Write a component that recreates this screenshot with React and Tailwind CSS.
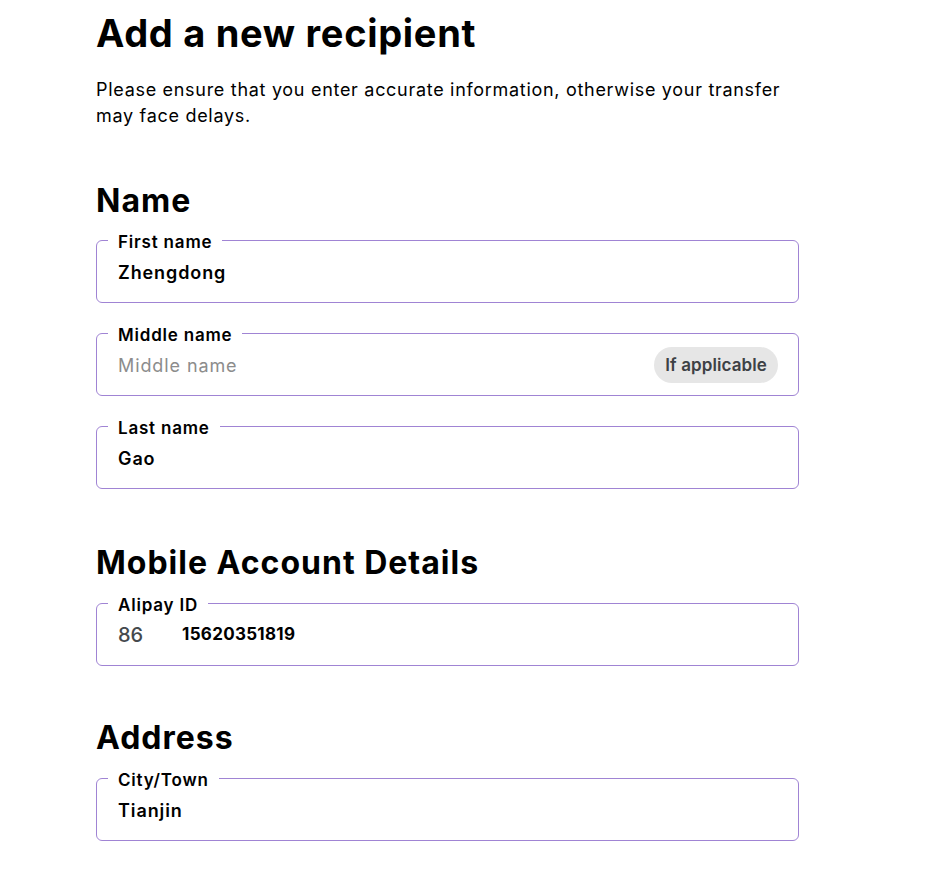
import { useState } from 'react';

function Field({ label, children }) {
  return (
    <fieldset className="rounded-[6px] border border-[#a084d4] pl-[11px] pr-[20px] pb-[12px]">
      <legend className="px-[10px] text-[17px] font-semibold leading-5 tracking-[0.8px] text-black">
        <span className="relative top-[2px]">{label}</span>
      </legend>
      <div className="mt-[4px] flex h-9 items-center pl-[10px]">{children}</div>
    </fieldset>
  );
}

export default function App() {
  const [first, setFirst] = useState('Zhengdong');
  const [middle, setMiddle] = useState('');
  const [last, setLast] = useState('Gao');
  const [phone, setPhone] = useState('15620351819');
  const [city, setCity] = useState('Tianjin');

  const inputCls =
    'w-full bg-transparent text-[18px] font-semibold tracking-[0.9px] text-black outline-none placeholder:font-normal placeholder:text-[#8c8c8c]';

  return (
    <div className="min-h-screen bg-white font-['Inter',sans-serif] text-black">
      <div className="ml-[96px] w-[703px] pt-[13px]">
        <h1 className="text-[38px] font-bold leading-10 tracking-[0.7px]">Add a new recipient</h1>
        <p className="mt-6 w-[700px] text-[18px] leading-[26px] tracking-[0.7px]">
          Please ensure that you enter accurate information, otherwise your transfer may face delays.
        </p>

        <h2 className="mt-[52px] text-[32px] font-bold leading-10 tracking-[1px]">Name</h2>
        <div className="mt-[9px] space-y-[20px]">
          <Field label="First name">
            <input className={inputCls} value={first} onChange={(e) => setFirst(e.target.value)} />
          </Field>
          <Field label="Middle name">
            <input
              className={inputCls}
              placeholder="Middle name"
              value={middle}
              onChange={(e) => setMiddle(e.target.value)}
            />
            <span className="shrink-0 rounded-full bg-[#e6e6e6] px-[11px] py-[7px] text-[17px] font-semibold leading-[22px] tracking-[0.1px] text-[#3d4145]">
              If applicable
            </span>
          </Field>
          <Field label="Last name">
            <input className={inputCls} value={last} onChange={(e) => setLast(e.target.value)} />
          </Field>
        </div>

        <h2 className="mt-[54px] text-[32px] font-bold leading-10 tracking-[1px]">Mobile Account Details</h2>
        <div className="mt-[10px]">
          <Field label="Alipay ID">
            <span className="w-[64px] shrink-0 text-[20px] font-medium text-[#45494d]">86</span>
            <input
              className="w-full bg-transparent text-[17px] font-bold tracking-[0.3px] text-black outline-none"
              value={phone}
              onChange={(e) => setPhone(e.target.value)}
            />
          </Field>
        </div>

        <h2 className="mt-[52px] text-[32px] font-bold leading-10 tracking-[1px]">Address</h2>
        <div className="mt-[10px]">
          <Field label="City/Town">
            <input className={inputCls} value={city} onChange={(e) => setCity(e.target.value)} />
          </Field>
        </div>
      </div>
    </div>
  );
}
